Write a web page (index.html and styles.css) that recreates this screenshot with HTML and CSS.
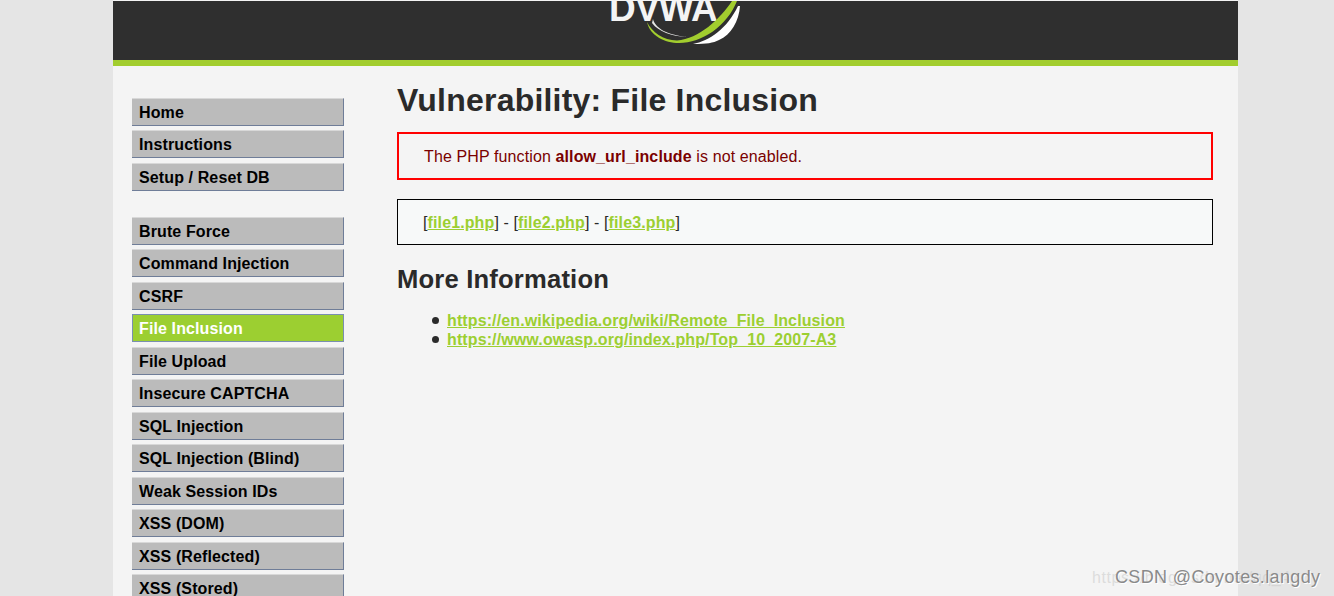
FILE: index.html
```html
<!DOCTYPE html>
<html lang="en">
<head>
<meta charset="utf-8">
<title>Vulnerability: File Inclusion</title>
<link rel="stylesheet" href="styles.css">
</head>
<body>
<div class="container">
  <header class="header">
    <div class="logo">
      <span class="logo-text">DVWA</span>
      <svg class="logo-swoosh" width="100" height="46" viewBox="0 0 100 46">
        <path d="M0 21C3 35 18 42 32 42C55 42 80 25 90 0L85 0C73 18 52 38 30 39.5C16 39.5 5 31 0 21Z" fill="#a2cd2e"/>
        <path d="M6 18C8 27 20 34 40 36C24 35 12 31 5 22Z" fill="#e8e8e8"/>
        <path d="M46 43C62 40 80 28 91 5L93 5C92 20 84 34 72 39C66 42 60 43 46 43Z" fill="#fff"/>
      </svg>
    </div>
  </header>
  <div class="main">
    <nav class="menu">
      <ul class="menu-group">
        <li class="menu-item"><a href="#">Home</a></li>
        <li class="menu-item"><a href="#">Instructions</a></li>
        <li class="menu-item"><a href="#">Setup / Reset DB</a></li>
      </ul>
      <ul class="menu-group">
        <li class="menu-item"><a href="#">Brute Force</a></li>
        <li class="menu-item"><a href="#">Command Injection</a></li>
        <li class="menu-item"><a href="#">CSRF</a></li>
        <li class="menu-item selected"><a href="#">File Inclusion</a></li>
        <li class="menu-item"><a href="#">File Upload</a></li>
        <li class="menu-item"><a href="#">Insecure CAPTCHA</a></li>
        <li class="menu-item"><a href="#">SQL Injection</a></li>
        <li class="menu-item"><a href="#">SQL Injection (Blind)</a></li>
        <li class="menu-item"><a href="#">Weak Session IDs</a></li>
        <li class="menu-item"><a href="#">XSS (DOM)</a></li>
        <li class="menu-item"><a href="#">XSS (Reflected)</a></li>
        <li class="menu-item"><a href="#">XSS (Stored)</a></li>
      </ul>
    </nav>
    <main class="content">
      <h1 class="title">Vulnerability: File Inclusion</h1>
      <div class="warning">The PHP function <b>allow_url_include</b> is not enabled.</div>
      <div class="files">[<a href="#">file1.php</a>] - [<a href="#">file2.php</a>] - [<a href="#">file3.php</a>]</div>
      <h2 class="subtitle">More Information</h2>
      <ul class="links">
        <li class="link-row"><a href="#">https://en.wikipedia.org/wiki/Remote_File_Inclusion</a></li>
        <li class="link-row"><a href="#">https://www.owasp.org/index.php/Top_10_2007-A3</a></li>
      </ul>
    </main>
  </div>
</div>
<div class="watermark"><span class="wm-back">https://blog.csdn.net/qq_4</span><span class="wm-front">CSDN @Coyotes.langdy</span></div>
</body>
</html>
```
FILE: styles.css
```css
html, body { margin: 0; padding: 0; height: 596px; overflow: hidden; }
body { background: #e5e5e5; color: #2a2a2a; font-family: "Liberation Sans", Arial, sans-serif; font-size: 16px; letter-spacing: .115px; }
.container { width: 1125px; height: 596px; margin-left: 113px; background: #f4f4f4; overflow: hidden; }
.header { height: 59px; margin-top: 1px; background: #2f2f2f; border-bottom: 6px solid #a2cd2e; display: flex; overflow: hidden; }
.logo { position: relative; width: 130px; height: 59px; margin-left: 497px; }
.logo-text { position: absolute; left: -1px; top: -12px; font-size: 37px; line-height: 40px; font-weight: 700; color: #f4f4f4; letter-spacing: -.8px; }
.logo-swoosh { position: absolute; left: 37px; top: 0; }
.main { display: flex; }
.menu { width: 212px; margin: 31.5px 0 0 19px; flex: none; }
.menu-group { list-style: none; margin: 0 0 26px; padding: 0; }
.menu-item { height: 28px; margin-bottom: 4.5px; box-sizing: border-box; background: #bbb; border-top: 1px solid #d8d8d8; border-right: 1px solid #6f7d98; border-bottom: 1px solid #6f7d98; }
.menu-item a { display: block; padding: 1px 0 0 7px; font-size: 16px; font-weight: 700; line-height: 25px; color: #000; text-decoration: none; }
.menu-item.selected { background: #9ccf31; border: 1px solid #7a8fb0; }
.menu-item.selected a { color: #fff; padding: 0 0 0 6px; line-height: 27px; }
.content { width: 816px; margin-left: 53px; flex: none; }
.title { margin: 14px 0 0; font-size: 32px; line-height: 40px; font-weight: 700; color: #2a2a2a; letter-spacing: .21px; }
.warning { box-sizing: border-box; height: 48px; margin-top: 12px; padding-left: 25px; border: 2px solid #f00; color: #7a0000; line-height: 45px; }
.files { box-sizing: border-box; height: 46px; margin-top: 19px; padding-left: 25px; border: 1px solid #000; background: #f7f9f9; line-height: 45px; color: #2a2a2a; }
.files a, .links a { color: #9ccf31; font-weight: 700; text-decoration: underline; }
.subtitle { margin: 19px 0 0; font-size: 25.6px; line-height: 30px; font-weight: 700; color: #2a2a2a; letter-spacing: .19px; }
.links { list-style: none; margin: 17px 0 0; padding-left: 35px; line-height: 19px; }
.link-row { display: flex; align-items: center; gap: 8px; }
.link-row::before { content: ""; width: 7px; height: 7px; border-radius: 50%; background: #2a2a2a; }
.watermark { position: absolute; left: 1092px; top: 564px; width: 242px; height: 28px; white-space: nowrap; overflow: hidden; font-family: "Liberation Sans", Arial, sans-serif; }
.wm-back { position: absolute; left: 0; top: 5px; font-size: 16px; color: rgba(200,200,200,.55); letter-spacing: .6px; }
.wm-front { position: absolute; left: 23px; top: 1px; font-size: 18px; line-height: 24px; color: #8a8a8a; text-shadow: 1px 1px 0 #fff; letter-spacing: .35px; }
```
